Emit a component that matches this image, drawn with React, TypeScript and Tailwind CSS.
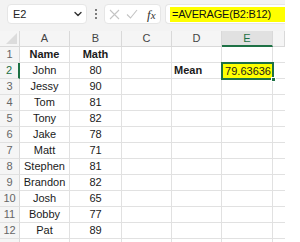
import React from "react";

const cols = [
  { key: "A", w: "w-[50px]" },
  { key: "B", w: "w-[52px]" },
  { key: "C", w: "w-[50px]" },
  { key: "D", w: "w-[50px]" },
  { key: "E", w: "w-[51px]" },
  { key: "F", w: "w-[12px]" },
];

const rows: [string, string][] = [
  ["Name", "Math"],
  ["John", "80"],
  ["Jessy", "90"],
  ["Tom", "81"],
  ["Tony", "82"],
  ["Jake", "78"],
  ["Matt", "71"],
  ["Stephen", "81"],
  ["Brandon", "82"],
  ["Josh", "65"],
  ["Bobby", "77"],
  ["Pat", "89"],
];

function Cell({
  w,
  children,
  className = "",
}: {
  w: string;
  children?: React.ReactNode;
  className?: string;
}) {
  return (
    <div
      className={`${w} h-full shrink-0 border-r border-b border-[#e1e1e1] flex items-center ${className}`}
    >
      {children}
    </div>
  );
}

function FormulaBar() {
  return (
    <div className="h-[31px] bg-[#f3f3f3] flex items-start pt-[4px]">
      <div className="ml-[7px] w-[80px] h-[20px] bg-white rounded-[4px] border border-[#e6e6e6] flex items-center pl-[5px] pr-[4px] text-[11px] text-[#222]">
        <span className="flex-1">E2</span>
        <svg width="8" height="6" viewBox="0 0 8 6" fill="none">
          <path d="M1 1.5l3 3 3-3" stroke="#333" strokeWidth="1.4" strokeLinecap="round" strokeLinejoin="round" />
        </svg>
      </div>
      <div className="w-[17px] h-[20px] flex flex-col items-center justify-center gap-[2px]">
        <span className="w-[2px] h-[2px] bg-[#555] rounded-full" />
        <span className="w-[2px] h-[2px] bg-[#555] rounded-full" />
        <span className="w-[2px] h-[2px] bg-[#555] rounded-full" />
      </div>
      <div className="w-[57px] h-[20px] bg-white rounded-[4px] border border-[#e6e6e6] flex items-center pl-[4px] gap-[6px]">
        <svg width="11" height="11" viewBox="0 0 11 11" fill="none">
          <path d="M1 1l9 9M10 1l-9 9" stroke="#c4c4c4" strokeWidth="1.1" />
        </svg>
        <svg width="12" height="10" viewBox="0 0 12 10" fill="none">
          <path d="M1 5.5l3.5 3.5L11 1" stroke="#c4c4c4" strokeWidth="1.1" />
        </svg>
        <span className="ml-[3px] text-[13px] italic text-[#333] font-['Liberation_Serif',serif] leading-none">
          f<span className="text-[11px]">x</span>
        </span>
      </div>
      <div className="ml-[4px] w-[120px] h-[20px] bg-white rounded-l-[4px] border border-r-0 border-[#e6e6e6] flex items-center pl-[4px]">
        <div className="h-[15px] flex-1 bg-[#ffff00] flex items-center pl-[2px] text-[11px] text-[#111] tracking-[-0.2px]">
          =AVERAGE(B2:B12)
        </div>
      </div>
    </div>
  );
}

export default function App() {
  return (
    <div className="w-[300px] h-[242px] bg-white overflow-hidden font-['Liberation_Sans',Arial,sans-serif]">
      <div className="w-[285px]">
        <FormulaBar />
        {/* column header */}
        <div className="h-[16px] flex bg-[#f5f5f5] text-[11px] text-[#444]">
          <div className="w-[20px] h-full shrink-0 border-r border-b border-[#d9d9d9] relative">
            <svg className="absolute right-[2px] bottom-[2px]" width="11" height="11" viewBox="0 0 11 11">
              <path d="M11 0V11H0Z" fill="#dcdcdc" />
            </svg>
          </div>
          {cols.map((c) => (
            <div
              key={c.key}
              className={`${c.w} h-full shrink-0 flex items-center justify-center border-r border-[#d9d9d9] ${
                c.key === "E"
                  ? "bg-[#e1e1e1] text-[#1e7145] border-b-2 border-b-[#1e7145]"
                  : "border-b"
              }`}
            >
              {c.key === "F" ? "" : c.key}
            </div>
          ))}
        </div>
        {/* rows */}
        {Array.from({ length: 13 }).map((_, i) => {
          const r = rows[i];
          const n = i + 1;
          const bold = i === 0 ? "font-bold" : "";
          return (
            <div key={n} className="h-[16px] flex text-[11px] text-[#1a1a1a]">
              <div
                className={`w-[20px] h-full shrink-0 flex items-center justify-center bg-[#f5f5f5] border-b border-[#e1e1e1] ${
                  n === 2
                    ? "text-[#1e7145] border-r-2 border-r-[#1e7145]"
                    : "text-[#666] border-r border-r-[#d9d9d9]"
                }`}
              >
                {n}
              </div>
              <Cell w={cols[0].w} className={`justify-center ${bold}`}>
                {r ? r[0] : ""}
              </Cell>
              <Cell w={cols[1].w} className={`justify-center ${bold}`}>
                {r ? r[1] : ""}
              </Cell>
              <Cell w={cols[2].w} />
              <Cell w={cols[3].w} className="pl-[2px] font-bold">
                {n === 2 ? "Mean" : ""}
              </Cell>
              {n === 2 ? (
                <div className="w-[51px] h-full shrink-0 relative">
                  <div className="absolute inset-[-1px] border-2 border-[#1e7145] bg-[#ffff00] flex items-center justify-end pr-[1px]">
                    79.63636
                  </div>
                  <span className="absolute right-[-3px] bottom-[-3px] w-[5px] h-[5px] bg-[#1e7145] border border-white" />
                </div>
              ) : (
                <Cell w={cols[4].w} />
              )}
              <Cell w={cols[5].w} className="border-r-0" />
            </div>
          );
        })}
      </div>
    </div>
  );
}
